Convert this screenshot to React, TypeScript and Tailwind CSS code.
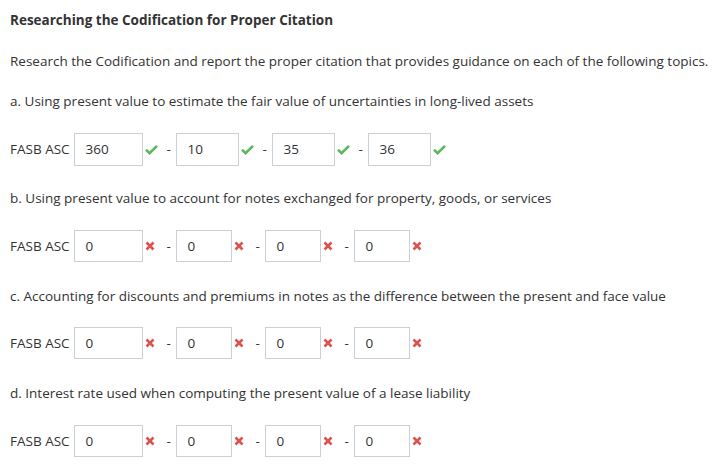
const questions = [
  {
    label: "a. Using present value to estimate the fair value of uncertainties in long-lived assets",
    values: ["360", "10", "35", "36"],
    ok: true,
    top: "mt-[22px]",
    gap: "mt-[23px]",
  },
  {
    label: "b. Using present value to account for notes exchanged for property, goods, or services",
    values: ["0", "0", "0", "0"],
    ok: false,
    top: "mt-[23px]",
    gap: "mt-[23px]",
  },
  {
    label: "c. Accounting for discounts and premiums in notes as the difference between the present and face value",
    values: ["0", "0", "0", "0"],
    ok: false,
    top: "mt-[25px]",
    gap: "mt-[22px]",
  },
  {
    label: "d. Interest rate used when computing the present value of a lease liability",
    values: ["0", "0", "0", "0"],
    ok: false,
    top: "mt-[25px]",
    gap: "mt-[23px]",
  },
]

function Check() {
  return (
    <svg width="13" height="11" viewBox="0 0 13 11" className="shrink-0">
      <path d="M1 5.8 L4.6 9.2 L12 1.8" fill="none" stroke="#5cb85c" strokeWidth="2.6" strokeLinejoin="miter" />
    </svg>
  )
}

function Cross() {
  return (
    <svg width="10" height="10" viewBox="0 0 10 10" className="shrink-0">
      <path d="M1.5 1.5 L8.5 8.5 M8.5 1.5 L1.5 8.5" fill="none" stroke="#d9534f" strokeWidth="2.6" />
    </svg>
  )
}

function Box({ value, width, ok }: { value: string; width: string; ok: boolean }) {
  return (
    <div className="flex items-center">
      <div className={`${width} ${ok ? "h-[33px]" : "h-[32px]"} border border-[#ccd0d6] bg-white flex items-center pl-[11px] text-[#333]`}>
        {value}
      </div>
      <div className="w-[15px] pl-[2px] flex">
        {ok ? <Check /> : <Cross />}
      </div>
    </div>
  )
}

export default function App() {
  return (
    <div
      className="w-[726px] h-[476px] bg-white text-[13.5px] text-[#333] px-[10px] pt-[11px] overflow-hidden"
      style={{ fontFamily: '"Open Sans", sans-serif' }}
    >
      <h1 className="font-bold leading-[18px] text-[#333]">Researching the Codification for Proper Citation</h1>
      <p className="mt-[23px] leading-[18px] whitespace-nowrap">
        Research the Codification and report the proper citation that provides guidance on each of the following topics.
      </p>
      {questions.map((q, i) => (
        <div key={i} className={q.top}>
          <p className="leading-[18px] whitespace-nowrap">{q.label}</p>
          <div className={`flex items-center ${q.gap}`}>
            <span className="mr-[4px]">FASB ASC</span>
            {q.values.map((v, j) => (
              <div key={j} className="flex items-center">
                {j > 0 && <span className="w-[18px] pl-[4px] text-center">-</span>}
                <Box
                  value={v}
                  ok={q.ok}
                  width={j === 0 ? "w-[69px]" : q.ok ? "w-[63px]" : "w-[56px]"}
                />
              </div>
            ))}
          </div>
        </div>
      ))}
    </div>
  )
}
